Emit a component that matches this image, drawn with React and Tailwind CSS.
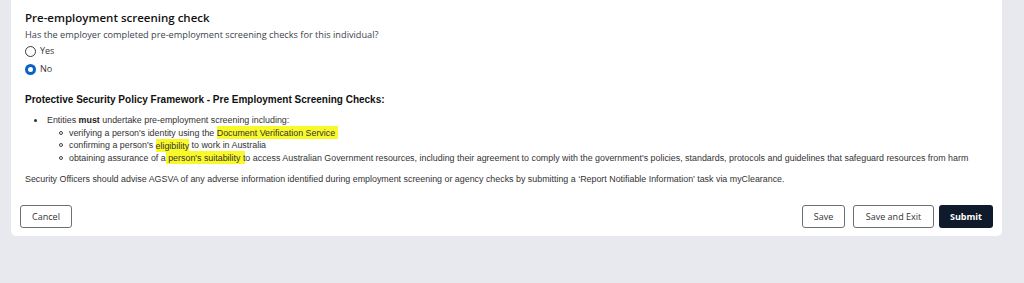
import { useState } from "react";

const OPTIONS = ["Yes", "No"];

function Radio({ label, checked, onChange }) {
  return (
    <label className="flex items-center gap-[4px] h-[14px] cursor-pointer">
      <span
        className={
          checked
            ? "w-[11px] h-[11px] rounded-full border-[3px] border-[#0b62c4] bg-white"
            : "w-[11px] h-[11px] rounded-full border border-[#3a3a3a] bg-white"
        }
      />
      <input type="radio" className="hidden" checked={checked} onChange={onChange} />
      <span className="text-[9px] text-[#333]">{label}</span>
    </label>
  );
}

function Mark({ children }) {
  return <span className="bg-[#f9f92a] py-[1.5px]">{children}</span>;
}

function Sub({ children }) {
  return (
    <li className="flex items-center">
      <span className="w-[44px] pl-[34px] flex">
        <span className="w-[4px] h-[4px] rounded-full border border-[#444]" />
      </span>
      <span>{children}</span>
    </li>
  );
}

export default function App() {
  const [answer, setAnswer] = useState("No");

  return (
    <div className="w-full h-[283px] bg-[#e8e9ee]" style={{ fontFamily: "'Open Sans', sans-serif" }}>
      <div className="ml-[11px] w-[991px] bg-white rounded-b-[5px] pb-[8px]">
        <div className="pl-[14px] pt-[11px]">
          <h2 className="text-[11.5px] leading-[14px] font-semibold text-[#111]">
            Pre-employment screening check
          </h2>
          <p className="mt-[4px] text-[9.2px] leading-[12px] text-[#3b3f4a]">
            Has the employer completed pre-employment screening checks for this individual?
          </p>
          <div className="mt-[3px] flex flex-col gap-[4px]">
            {OPTIONS.map((o) => (
              <Radio key={o} label={o} checked={answer === o} onChange={() => setAnswer(o)} />
            ))}
          </div>

          <div className="text-[#333]" style={{ fontFamily: "'Liberation Sans', Arial, sans-serif" }}>
            <h3 className="mt-[18px] text-[10px] leading-[12px] font-bold text-[#111]">
              Protective Security Policy Framework - Pre Employment Screening Checks:
            </h3>
            <ul className="mt-[8px] text-[8.9px] leading-[12.6px]">
              <li className="flex items-center">
                <span className="w-[22px] pl-[9px] flex">
                  <span className="w-[3px] h-[3px] rounded-full bg-[#333]" />
                </span>
                <span>
                  Entities <b className="font-bold text-[#222]">must</b> undertake pre-employment screening including:
                </span>
              </li>
              <Sub>
                verifying a person's identity using the <Mark>Document Verification Service&nbsp;</Mark>
              </Sub>
              <Sub>
                confirming a person's <Mark>eligibility</Mark> to work in Australia
              </Sub>
              <Sub>
                obtaining assurance of a<Mark> person's suitability t</Mark>o access Australian Government
                resources, including their agreement to comply with the government's policies, standards,
                protocols and guidelines that safeguard resources from harm
              </Sub>
            </ul>
            <p className="mt-[9px] text-[8.9px] leading-[12px]">
              Security Officers should advise AGSVA of any adverse information identified during employment
              screening or agency checks by submitting a ‘Report Notifiable Information’ task via myClearance.
            </p>
          </div>
        </div>

        <div className="mt-[20px] px-[9px] flex items-center">
          <button className="h-[23px] w-[52px] rounded-[3px] border border-[#6b6f78] text-[9px] text-[#333]">
            Cancel
          </button>
          <div className="ml-auto flex items-center">
            <button className="h-[23px] w-[43px] rounded-[3px] border border-[#6b6f78] text-[9px] text-[#333]">
              Save
            </button>
            <button className="ml-[8px] h-[23px] w-[81px] rounded-[3px] border border-[#6b6f78] text-[9px] text-[#333]">
              Save and Exit
            </button>
            <button className="ml-[5px] h-[23px] w-[54px] rounded-[3px] bg-[#0f1a2a] text-[9px] font-bold text-white">
              Submit
            </button>
          </div>
        </div>
      </div>
    </div>
  );
}
